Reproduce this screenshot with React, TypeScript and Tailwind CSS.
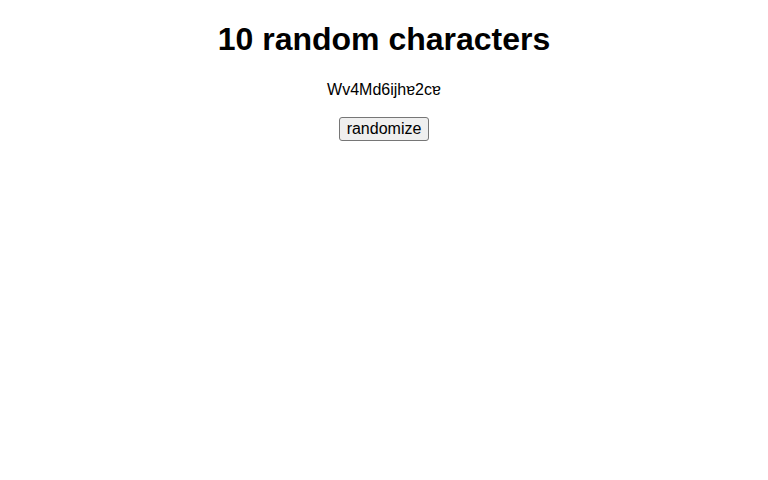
export default function App() {
  return (
    <div className="text-center text-black font-['Liberation_Sans',Arial,sans-serif]">
      <h1 className="mt-[21.44px] mb-[22.5px] text-[32px] leading-[37px] font-bold">10 random characters</h1>
      <p className="text-base leading-[18px]">Wv4Md6ijhɐ2cɐ</p>
      <div className="mt-[18px]">
        <button className="h-[24px] w-[90px] rounded-[3px] border border-[#767676] bg-[#efefef] text-base leading-[18px] hover:bg-[#e5e5e5]">
          randomize
        </button>
      </div>
    </div>
  );
}
